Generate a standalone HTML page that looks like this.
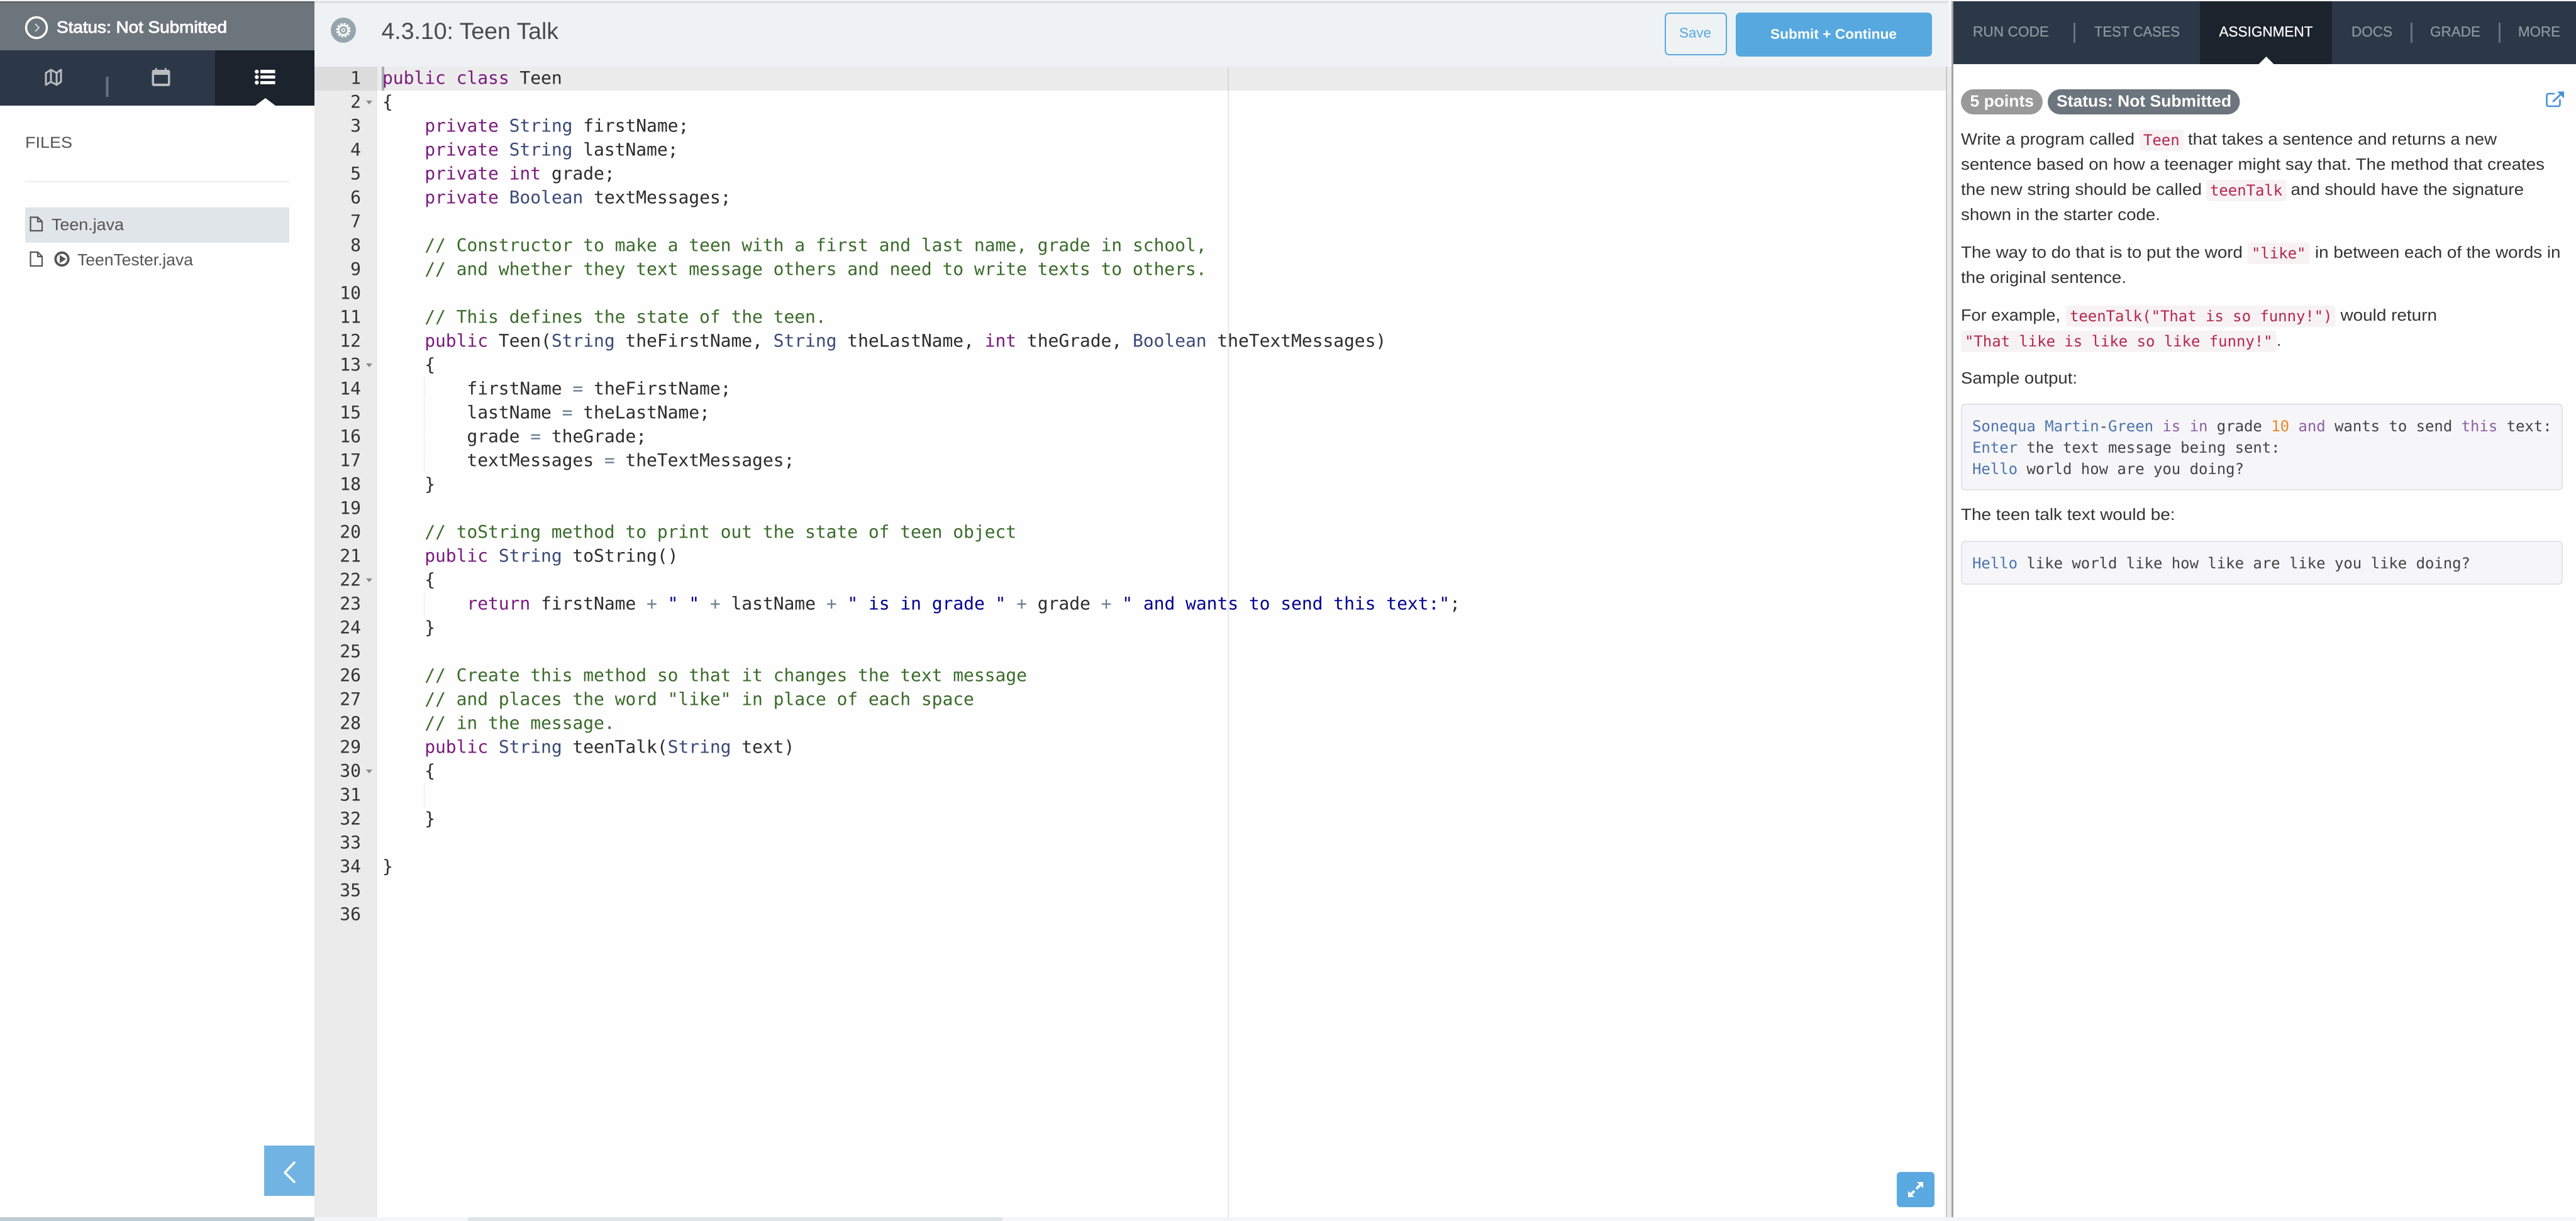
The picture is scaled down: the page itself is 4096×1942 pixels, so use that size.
<!DOCTYPE html>
<html lang="en">
<head>
<meta charset="utf-8">
<title>4.3.10: Teen Talk</title>
<style>
html,body{margin:0;padding:0;width:4096px;height:1942px;overflow:hidden;background:#fff}
svg{display:block;position:absolute;left:0;top:0}
text{font-family:"Liberation Sans",sans-serif;text-rendering:geometricPrecision;white-space:pre}
.m{font-family:"DejaVu Sans Mono",monospace;font-size:28px;letter-spacing:-.056px;fill:#2c2c2c}
.n{font-family:"DejaVu Sans Mono",monospace;font-size:28px;fill:#333;text-anchor:end}
.k{fill:#7b1a7d}.t{fill:#3a4a78}.c{fill:#3a6b2a}.o{fill:#6b7d90}.s{fill:#00008f}
.b{font-size:26px;fill:#333;transform:translateY(-1px)}
.ic{font-family:"DejaVu Sans Mono",monospace;font-size:24px;letter-spacing:-.05px;fill:#b5284e}
.p{font-family:"DejaVu Sans Mono",monospace;font-size:24px;letter-spacing:-.05px;fill:#444}
.pb{fill:#4d74ad}.pp{fill:#8e5fa8}.po{fill:#e8872a}
.nav{font-size:23px;fill:#8d99a1;stroke:#8d99a1;stroke-width:.25px}
</style>
</head>
<body>
<svg width="4096" height="1942" viewBox="0 0 4096 1942" xmlns="http://www.w3.org/2000/svg">
<rect width="4096" height="1942" fill="#fefefe"/>
<rect width="4096" height="2" fill="#f4f4f4"/>

<!-- left sidebar -->
<rect x="0" y="2" width="500" height="78" fill="#6c757c"/>
<rect x="0" y="2" width="500" height="3" fill="#5e666c"/>
<circle cx="58" cy="44" r="16.5" fill="none" stroke="#fff" stroke-width="3.5"/>
<path d="M56 38L62 44L56 50" fill="none" stroke="#e4e6e8" stroke-width="1.6"/>
<text x="90" y="52" font-size="26" fill="#fff" stroke="#fff" stroke-width=".9" textLength="271" lengthAdjust="spacingAndGlyphs">Status: Not Submitted</text>

<rect x="0" y="80" width="500" height="88" fill="#2c3848"/>
<rect x="342" y="80" width="158" height="88" fill="#1c232d"/>
<path d="M406 168L422 156L438 168Z" fill="#fff"/>
<rect x="168.500" y="122" width="4" height="32" fill="#66727e"/>
<path d="M73 116L81 111L90 116L97 111V130L90 135L81 130L73 135ZM81 111V130M90 116V135" fill="none" stroke="#b8bcc0" stroke-width="3" stroke-linejoin="round"/>
<rect x="241.500" y="111" width="29" height="26" rx="3" fill="#b8bcc0"/>
<rect x="245" y="119" width="22" height="14" fill="#2c3848"/>
<rect x="247" y="108" width="2.500" height="6" fill="#b8bcc0"/>
<rect x="262" y="108" width="2.500" height="6" fill="#b8bcc0"/>
<circle cx="408.300" cy="114" r="3.200" fill="#fff"/><circle cx="408.300" cy="122.500" r="3.200" fill="#fff"/><circle cx="408.300" cy="131.300" r="3.200" fill="#fff"/>
<rect x="414" y="111" width="23.500" height="5.500" fill="#fff"/><rect x="414" y="120" width="23.500" height="5" fill="#fff"/><rect x="414" y="129" width="23.500" height="5" fill="#fff"/>

<text x="40" y="235" font-size="25" fill="#555" textLength="75" lengthAdjust="spacingAndGlyphs">FILES</text>
<rect x="40" y="288" width="420" height="2" fill="#eeeeee"/>
<rect x="40" y="330" width="420" height="56" fill="#e0e5e9"/>
<path id="f1" d="M48.500 345.500H60L67 352.500V367H48.500ZM60 345.500V352.500H67" fill="none" stroke="#555" stroke-width="2.200"/>
<text x="82" y="366" font-size="26" fill="#555" textLength="115" lengthAdjust="spacingAndGlyphs">Teen.java</text>
<path d="M48.500 401H60L67 408V423H48.500ZM60 401V408H67" fill="none" stroke="#555" stroke-width="2.200"/>
<circle cx="98.500" cy="412" r="10.200" fill="none" stroke="#555" stroke-width="3.800"/>
<path d="M95 405.500L105 412L95 418.500Z" fill="#555"/>
<text x="123" y="422" font-size="26" fill="#555" textLength="184" lengthAdjust="spacingAndGlyphs">TeenTester.java</text>

<rect x="420" y="1822" width="80" height="80" fill="#71b3e2"/>
<path d="M468 1849L453 1865L468 1880" fill="none" stroke="#fff" stroke-width="3.500" stroke-linecap="round" stroke-linejoin="round"/>

<!-- header -->
<rect x="500" y="2" width="2598" height="104" fill="#eef2f5"/>
<rect x="500" y="2" width="2598" height="3" fill="#dcdfe2"/>
<circle cx="546" cy="48" r="20" fill="#95a5ab"/>
<circle cx="546" cy="48" r="10" fill="none" stroke="#fff" stroke-width="3" stroke-dasharray="3.200 2.030"/>
<circle cx="546" cy="48" r="7.500" fill="none" stroke="#fff" stroke-width="2.400"/>
<circle cx="546" cy="48" r="2.500" fill="none" stroke="#fff" stroke-width="1.500"/>
<text x="606.500" y="62" font-size="37" fill="#4a4a4a" textLength="281.500" lengthAdjust="spacingAndGlyphs">4.3.10: Teen Talk</text>
<rect x="2648" y="21" width="97" height="66" rx="6" fill="none" stroke="#5aa9e0" stroke-width="2"/>
<text x="2670" y="59.500" font-size="22" fill="#56a8df" textLength="51" lengthAdjust="spacingAndGlyphs">Save</text>
<rect x="2760" y="20" width="312" height="70" rx="7" fill="#56a8df"/>
<text x="2815" y="61.500" font-size="22" font-weight="700" fill="#fff" textLength="201" lengthAdjust="spacingAndGlyphs">Submit + Continue</text>

<!-- editor -->
<rect x="500" y="106" width="100" height="1830" fill="#ebebeb"/>
<rect x="500" y="106" width="100" height="38" fill="#dcdcdc"/>
<rect x="600" y="106" width="2494" height="38" fill="#ececec"/>
<rect x="1952" y="144" width="2" height="1792" fill="#e7e7e7"/>
<rect x="1952" y="106" width="2" height="38" fill="#d6d6d6"/>
<rect x="607" y="106" width="4" height="38" fill="#a9a9ad"/>
<g stroke="#dcdcdc" stroke-width="1.500" stroke-dasharray="2 2">
<path d="M674.500 600V752M674.500 942V980M674.500 1246V1284"/>
</g>
<g fill="#888">
<path d="M582 160H592L587 166Z"/>
<path d="M582 578H592L587 584Z"/>
<path d="M582 920H592L587 926Z"/>
<path d="M582 1224H592L587 1230Z"/>
</g>

<text class="n" x="574" y="133.500">1</text><text class="n" x="574" y="171.500">2</text><text class="n" x="574" y="209.500">3</text><text class="n" x="574" y="247.500">4</text><text class="n" x="574" y="285.500">5</text><text class="n" x="574" y="323.500">6</text><text class="n" x="574" y="361.500">7</text><text class="n" x="574" y="399.500">8</text><text class="n" x="574" y="437.500">9</text><text class="n" x="574" y="475.500">10</text><text class="n" x="574" y="513.500">11</text><text class="n" x="574" y="551.500">12</text><text class="n" x="574" y="589.500">13</text><text class="n" x="574" y="627.500">14</text><text class="n" x="574" y="665.500">15</text><text class="n" x="574" y="703.500">16</text><text class="n" x="574" y="741.500">17</text><text class="n" x="574" y="779.500">18</text><text class="n" x="574" y="817.500">19</text><text class="n" x="574" y="855.500">20</text><text class="n" x="574" y="893.500">21</text><text class="n" x="574" y="931.500">22</text><text class="n" x="574" y="969.500">23</text><text class="n" x="574" y="1007.500">24</text><text class="n" x="574" y="1045.500">25</text><text class="n" x="574" y="1083.500">26</text><text class="n" x="574" y="1121.500">27</text><text class="n" x="574" y="1159.500">28</text><text class="n" x="574" y="1197.500">29</text><text class="n" x="574" y="1235.500">30</text><text class="n" x="574" y="1273.500">31</text><text class="n" x="574" y="1311.500">32</text><text class="n" x="574" y="1349.500">33</text><text class="n" x="574" y="1387.500">34</text><text class="n" x="574" y="1425.500">35</text><text class="n" x="574" y="1463.500">36</text>

<text class="m" x="608" y="133.500"><tspan class="k">public class</tspan> Teen</text>
<text class="m" x="608" y="171.500">{</text>
<text class="m" x="675.200" y="209.500"><tspan class="k">private</tspan> <tspan class="t">String</tspan> firstName;</text>
<text class="m" x="675.200" y="247.500"><tspan class="k">private</tspan> <tspan class="t">String</tspan> lastName;</text>
<text class="m" x="675.200" y="285.500"><tspan class="k">private</tspan> <tspan class="k">int</tspan> grade;</text>
<text class="m" x="675.200" y="323.500"><tspan class="k">private</tspan> <tspan class="t">Boolean</tspan> textMessages;</text>
<text class="m c" x="675.200" y="399.500">// Constructor to make a teen with a first and last name, grade in school,</text>
<text class="m c" x="675.200" y="437.500">// and whether they text message others and need to write texts to others.</text>
<text class="m c" x="675.200" y="513.500">// This defines the state of the teen.</text>
<text class="m" x="675.200" y="551.500"><tspan class="k">public</tspan> Teen(<tspan class="t">String</tspan> theFirstName, <tspan class="t">String</tspan> theLastName, <tspan class="k">int</tspan> theGrade, <tspan class="t">Boolean</tspan> theTextMessages)</text>
<text class="m" x="675.200" y="589.500">{</text>
<text class="m" x="742.400" y="627.500">firstName <tspan class="o">=</tspan> theFirstName;</text>
<text class="m" x="742.400" y="665.500">lastName <tspan class="o">=</tspan> theLastName;</text>
<text class="m" x="742.400" y="703.500">grade <tspan class="o">=</tspan> theGrade;</text>
<text class="m" x="742.400" y="741.500">textMessages <tspan class="o">=</tspan> theTextMessages;</text>
<text class="m" x="675.200" y="779.500">}</text>
<text class="m c" x="675.200" y="855.500">// toString method to print out the state of teen object</text>
<text class="m" x="675.200" y="893.500"><tspan class="k">public</tspan> <tspan class="t">String</tspan> toString()</text>
<text class="m" x="675.200" y="931.500">{</text>
<text class="m" x="742.400" y="969.500"><tspan class="k">return</tspan> firstName <tspan class="o">+</tspan> <tspan class="s">" "</tspan> <tspan class="o">+</tspan> lastName <tspan class="o">+</tspan> <tspan class="s">" is in grade "</tspan> <tspan class="o">+</tspan> grade <tspan class="o">+</tspan> <tspan class="s">" and wants to send this text:"</tspan>;</text>
<text class="m" x="675.200" y="1007.500">}</text>
<text class="m c" x="675.200" y="1083.500">// Create this method so that it changes the text message</text>
<text class="m c" x="675.200" y="1121.500">// and places the word "like" in place of each space</text>
<text class="m c" x="675.200" y="1159.500">// in the message.</text>
<text class="m" x="675.200" y="1197.500"><tspan class="k">public</tspan> <tspan class="t">String</tspan> teenTalk(<tspan class="t">String</tspan> text)</text>
<text class="m" x="675.200" y="1235.500">{</text>
<text class="m" x="675.200" y="1311.500">}</text>
<text class="m" x="608" y="1387.500">}</text>

<rect x="3016" y="1864" width="60" height="56" rx="6" fill="#5aa9e0"/>
<path d="M3058 1880V1890L3048 1880ZM3034 1904V1894L3044 1904Z" fill="#fff"/>
<path d="M3053 1885L3047 1891M3039 1899L3044 1894" stroke="#fff" stroke-width="4"/>

<!-- splitter -->
<rect x="3094" y="106" width="2" height="1830" fill="#c8c8c8"/>
<rect x="3096" y="106" width="7" height="1830" fill="#eaeaea"/>
<rect x="3098" y="2" width="5" height="104" fill="#f4f5f6"/>
<rect x="3103" y="2" width="3" height="1934" fill="#a4a4a4"/>

<!-- right panel -->
<rect x="3106" y="2" width="990" height="100" fill="#2c3848"/>
<rect x="3498" y="2" width="210" height="100" fill="#1c232d"/>
<path d="M3591.500 102L3603.500 90L3615.500 102Z" fill="#fff"/>
<text class="nav" x="3137" y="58" textLength="121" lengthAdjust="spacingAndGlyphs">RUN CODE</text>
<rect x="3297" y="36" width="3" height="32" fill="#66727e"/>
<text class="nav" x="3330" y="58" textLength="136" lengthAdjust="spacingAndGlyphs">TEST CASES</text>
<text class="nav" x="3528.500" y="58" style="fill:#fff;stroke:#fff" textLength="149" lengthAdjust="spacingAndGlyphs">ASSIGNMENT</text>
<text class="nav" x="3739" y="58" textLength="65" lengthAdjust="spacingAndGlyphs">DOCS</text>
<rect x="3833" y="36" width="3" height="32" fill="#66727e"/>
<text class="nav" x="3864" y="58" textLength="80" lengthAdjust="spacingAndGlyphs">GRADE</text>
<rect x="3973" y="36" width="3" height="32" fill="#66727e"/>
<text class="nav" x="4004" y="58" textLength="67" lengthAdjust="spacingAndGlyphs">MORE</text>

<rect x="3118" y="142" width="130" height="40" rx="20" fill="#999"/>
<text x="3132.500" y="169.500" font-size="26" font-weight="700" fill="#fff" textLength="101.500" lengthAdjust="spacingAndGlyphs">5 points</text>
<rect x="3256" y="142" width="305.500" height="40" rx="20" fill="#6c757d"/>
<text x="3270" y="169.500" font-size="26" font-weight="700" fill="#fff" textLength="278" lengthAdjust="spacingAndGlyphs">Status: Not Submitted</text>
<path d="M4062 149H4052.500Q4049.500 149 4049.500 152V166Q4049.500 169 4052.500 169H4067.500Q4070.500 169 4070.500 166V158" fill="none" stroke="#4a90d9" stroke-width="2.600"/>
<path d="M4059 162L4074 148" fill="none" stroke="#4a90d9" stroke-width="2.800"/>
<path d="M4066 145.500H4077V156.500Z" fill="#4a90d9"/>

<text class="b" x="3118" y="231" textLength="276" lengthAdjust="spacingAndGlyphs">Write a program called</text>
<rect x="3402" y="206" width="70" height="34" rx="5" fill="#f7f2f4"/>
<text class="ic" x="3408" y="231">Teen</text>
<text class="b" x="3479" y="231" textLength="491" lengthAdjust="spacingAndGlyphs">that takes a sentence and returns a new</text>
<text class="b" x="3118" y="271" textLength="928" lengthAdjust="spacingAndGlyphs">sentence based on how a teenager might say that. The method that creates</text>
<text class="b" x="3118" y="311" textLength="383" lengthAdjust="spacingAndGlyphs">the new string should be called</text>
<rect x="3508" y="286" width="128" height="34" rx="5" fill="#f7f2f4"/>
<text class="ic" x="3514" y="311">teenTalk</text>
<text class="b" x="3642.500" y="311" textLength="370.500" lengthAdjust="spacingAndGlyphs">and should have the signature</text>
<text class="b" x="3118" y="351" textLength="317" lengthAdjust="spacingAndGlyphs">shown in the starter code.</text>

<text class="b" x="3118" y="411" textLength="448" lengthAdjust="spacingAndGlyphs">The way to do that is to put the word</text>
<rect x="3574" y="386" width="98" height="34" rx="5" fill="#f7f2f4"/>
<text class="ic" x="3580" y="411">"like"</text>
<text class="b" x="3681" y="411" textLength="390.500" lengthAdjust="spacingAndGlyphs">in between each of the words in</text>
<text class="b" x="3118" y="451" textLength="263" lengthAdjust="spacingAndGlyphs">the original sentence.</text>

<text class="b" x="3118" y="511" textLength="158" lengthAdjust="spacingAndGlyphs">For example,</text>
<rect x="3285" y="486" width="428" height="34" rx="5" fill="#f7f2f4"/>
<text class="ic" x="3291" y="511">teenTalk("That is so funny!")</text>
<text class="b" x="3721.500" y="511" textLength="153.500" lengthAdjust="spacingAndGlyphs">would return</text>
<rect x="3118" y="526" width="502" height="34" rx="5" fill="#f7f2f4"/>
<text class="ic" x="3124" y="551">"That like is like so like funny!"</text>
<text class="b" x="3620" y="551">.</text>

<text class="b" x="3118" y="611" textLength="185" lengthAdjust="spacingAndGlyphs">Sample output:</text>

<rect x="3119" y="643" width="955" height="136" rx="6" fill="#f6f6f8" stroke="#e3e3e8" stroke-width="2"/>
<text class="p" x="3136" y="686"><tspan class="pb">Sonequa Martin</tspan>-<tspan class="pb">Green</tspan> <tspan class="pp">is in</tspan> grade <tspan class="po">10</tspan> <tspan class="pp">and</tspan> wants to send <tspan class="pp">this</tspan> text:</text>
<text class="p" x="3136" y="720"><tspan class="pb">Enter</tspan> the text message being sent:</text>
<text class="p" x="3136" y="754"><tspan class="pb">Hello</tspan> world how are you doing?</text>

<text class="b" x="3118" y="828" textLength="340.500" lengthAdjust="spacingAndGlyphs">The teen talk text would be:</text>

<rect x="3119" y="861" width="955" height="68" rx="6" fill="#f6f6f8" stroke="#e3e3e8" stroke-width="2"/>
<text class="p" x="3136" y="904"><tspan class="pb">Hello</tspan> like world like how like are like you like doing?</text>

<!-- bottom strip -->
<rect x="0" y="1936" width="500" height="6" fill="#c0ccd3"/>
<rect x="500" y="1936" width="3596" height="6" fill="#f4f5f7"/>
<rect x="744" y="1936" width="850" height="6" fill="#dee4e8"/>
</svg>
</body>
</html>
